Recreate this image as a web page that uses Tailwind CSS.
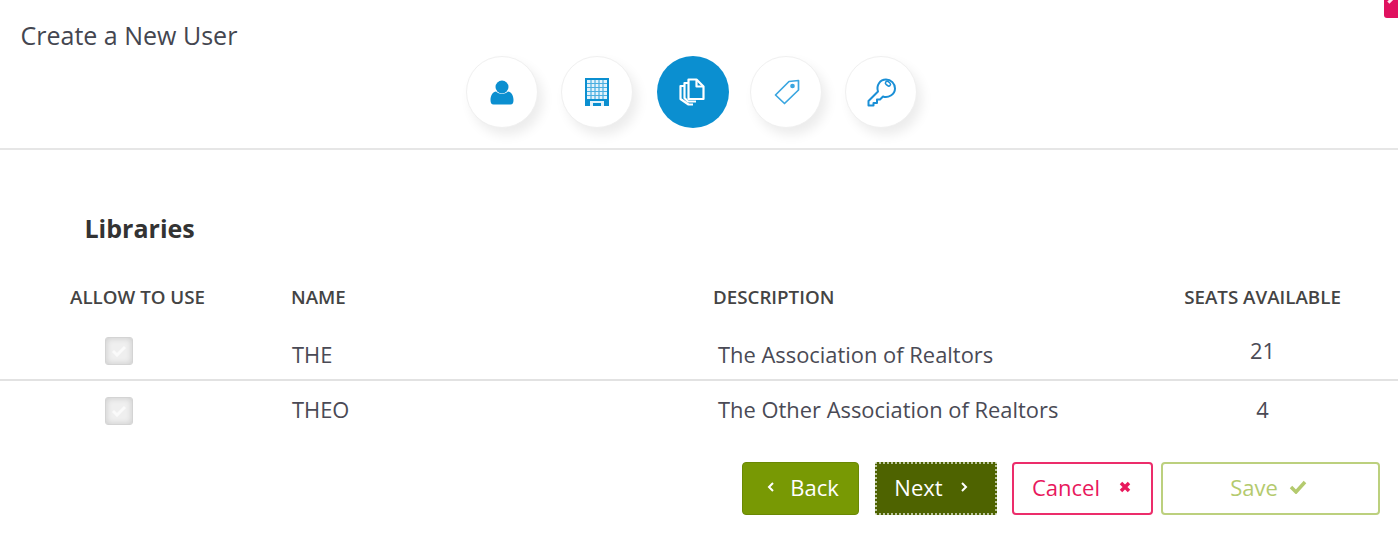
<!DOCTYPE html>
<html>
<head>
<meta charset="utf-8">
<script src="https://cdn.jsdelivr.net/npm/@tailwindcss/browser@4"></script>
</head>
<body class="bg-white font-['Open_Sans',sans-serif] text-[#4a4a55] overflow-hidden">
<div class="relative w-[1398px] h-[535px]">
  <div class="absolute right-0 top-0 w-[14px] h-[18px] bg-[#e0115f] rounded-bl-[3px] overflow-hidden">
    <div class="absolute left-[3px] top-[-2px] w-[9px] h-[3px] bg-white/90 -rotate-45"></div>
  </div>

  <header class="h-[150px] border-b-2 border-[#e6e6e6] relative">
    <h1 class="pl-[20.5px] pt-[18px] text-[25px] leading-[34px] text-[#444650] font-normal">Create a New User</h1>
    <div class="absolute left-[466px] top-[56px] flex">
      <div class="w-[72px] h-[72px] rounded-full bg-white border border-[#f0f0f0] shadow-[5px_7px_12px_rgba(0,0,0,0.08)] flex items-center justify-center">
        <svg width="24" height="25" viewBox="0 0 24 25" fill="#0b8fd0"><circle cx="12" cy="7" r="6.500"/><path d="M0.500 20c0-5 2.500-8 5.500-8.500 1.500 1.500 3.800 2.500 6 2.500s4.500-1 6-2.500c3 .5 5.500 3.500 5.500 8.500 0 3-1 4.500-3 4.500H3.500c-2 0-3-1.500-3-4.500z"/></svg>
      </div>
      <div class="ml-[23px] w-[72px] h-[72px] rounded-full bg-white border border-[#f0f0f0] shadow-[5px_7px_12px_rgba(0,0,0,0.08)] flex items-center justify-center">
        <svg width="24" height="28" viewBox="0 0 24 28"><rect width="24" height="28" fill="#0b8fd0"/><path d="M2 2h20v19H2z" fill="#e3f2fb"/><path d="M2 5.500h20M2 9.500h20M2 13.500h20M2 17.500h20M6 2v19M10 2v19M14 2v19M18 2v19" stroke="#4aaee0" stroke-width="1.200"/><path d="M5 28v-5h14v5h-3v-3H8v3z" fill="#e3f2fb"/></svg>
      </div>
      <div class="ml-[24px] w-[72px] h-[72px] rounded-full bg-[#0b8fd0] flex items-center justify-center">
        <svg width="26" height="28" viewBox="0 0 26 28" fill="none" stroke="#fff" stroke-width="2.200" stroke-linejoin="round" class="-ml-[2px]"><path d="M5 8H1.500v13l8 5.500H14"/><path d="M9 5H5.500v15l3.500 3.500h8"/><path d="M9.500 1.500h8l7 7v12.500H9.500z" fill="#0b8fd0"/><path d="M17.500 1.500v7h7"/></svg>
      </div>
      <div class="ml-[21px] w-[72px] h-[72px] rounded-full bg-white border border-[#f0f0f0] shadow-[5px_7px_12px_rgba(0,0,0,0.08)] flex items-center justify-center">
        <svg width="26" height="26" viewBox="0 0 26 26" fill="none" stroke="#3aa6e0" stroke-width="1.700" stroke-linejoin="round" class="ml-[1px]"><path d="M1.500 16 15 2.500l9.500-1v9.500L10.500 24.500z"/><circle cx="18.500" cy="7" r="1.500" fill="#3aa6e0"/></svg>
      </div>
      <div class="ml-[23px] w-[72px] h-[72px] rounded-full bg-white border border-[#f0f0f0] shadow-[5px_7px_12px_rgba(0,0,0,0.08)] flex items-center justify-center">
        <svg width="30" height="30" viewBox="0 0 30 30" fill="none" stroke="#1a8fd6" stroke-width="2" stroke-linejoin="round" class="ml-[2px]"><path d="M11 14.500 1.500 24v4.500h5v-2.500H10v-3.500h3l3-3c5 2 12-2 12-8 0-5-4-9-9-9-6 0-10 6-8 12z"/><rect x="18" y="5" width="5.500" height="3.500" rx="1.700" transform="rotate(40 21 7)" stroke-width="1.500"/></svg>
      </div>
    </div>
  </header>

  <h2 class="pl-[84.5px] pt-[60px] text-[25px] leading-[36px] font-bold text-[#333333]">Libraries</h2>

  <div class="mt-[39px] grid grid-cols-[291px_422px_471px_157px] text-[18.75px] leading-[24px] font-semibold text-[#444444]">
    <div class="pl-[70px] whitespace-nowrap">ALLOW TO USE</div>
    <div>NAME</div>
    <div>DESCRIPTION</div>
    <div class="whitespace-nowrap text-center">SEATS AVAILABLE</div>
  </div>

  <div class="mt-[28px] h-[44px] border-b-2 border-[#e2e2e2] grid grid-cols-[291px_422px_471px_157px] text-[21.9px] leading-[30px]">
    <div class="pl-[105px]">
      <div class="w-[28px] h-[28px] rounded-[3px] border border-[#d4d4d4] bg-[#efefef] flex items-center justify-center shadow-[inset_0_0_6px_rgba(0,0,0,0.16)]">
        <svg width="16" height="12" viewBox="0 0 16 12" fill="none" stroke="#fafafa" stroke-width="3"><path d="M2 6l4 4 8-8"/></svg>
      </div>
    </div>
    <div class="pl-[1px] pt-[3px]">THE</div>
    <div class="pl-[5px] pt-[3px] whitespace-nowrap">The Association of Realtors</div>
    <div class="text-center -mt-[1px]">21</div>
  </div>

  <div class="pt-[16px] h-[81px] grid grid-cols-[291px_422px_471px_157px] text-[21.9px] leading-[30px]">
    <div class="pl-[105px]">
      <div class="w-[28px] h-[28px] rounded-[3px] border border-[#d4d4d4] bg-[#efefef] flex items-center justify-center shadow-[inset_0_0_6px_rgba(0,0,0,0.16)]">
        <svg width="16" height="12" viewBox="0 0 16 12" fill="none" stroke="#fafafa" stroke-width="3"><path d="M2 6l4 4 8-8"/></svg>
      </div>
    </div>
    <div class="pl-[1px] -mt-[2px]">THEO</div>
    <div class="pl-[5px] -mt-[2px] whitespace-nowrap">The Other Association of Realtors</div>
    <div class="text-center -mt-[2px]">4</div>
  </div>

  <div class="flex pl-[742px] text-[22px] leading-[30px]">
    <button class="w-[117px] h-[53px] pb-[4px] pl-[5px] rounded-[4px] bg-[#789904] border border-[#6a8804] text-white flex items-center justify-center gap-[15px]">
      <svg width="8" height="12" viewBox="0 0 8 12" fill="none" stroke="#fff" stroke-width="2"><path d="M6 2 2 6l4 4"/></svg>
      <span>Back</span>
    </button>
    <button class="ml-[16px] w-[122px] h-[53px] pb-[4px] pr-[10px] rounded-[2px] bg-[#4e6300] border-2 border-dotted border-[#b9c49a] text-white flex items-center justify-center gap-[17px]">
      <span>Next</span>
      <svg width="8" height="12" viewBox="0 0 8 12" fill="none" stroke="#fff" stroke-width="2"><path d="m2 2 4 4-4 4"/></svg>
    </button>
    <button class="ml-[15px] w-[141px] h-[53px] pb-[4px] pr-[2px] rounded-[4px] bg-white border-2 border-[#ec2d6b] text-[#e8185c] flex items-center justify-center gap-[19px]">
      <span>Cancel</span>
      <svg width="12" height="12" viewBox="0 0 12 12" fill="none" stroke="#e8185c" stroke-width="3.500"><path d="m2 2 8 8M10 2l-8 8"/></svg>
    </button>
    <button class="ml-[8px] w-[219px] h-[53px] pb-[4px] pr-[4px] rounded-[4px] bg-white border-2 border-[#bcd07e] text-[#b4ca6e] flex items-center justify-center gap-[11px]">
      <span>Save</span>
      <svg width="18" height="14" viewBox="0 0 18 14" fill="none" stroke="#b4ca6e" stroke-width="3.500"><path d="m2 7 5 5 9-10"/></svg>
    </button>
  </div>
</div>
</body>
</html>
